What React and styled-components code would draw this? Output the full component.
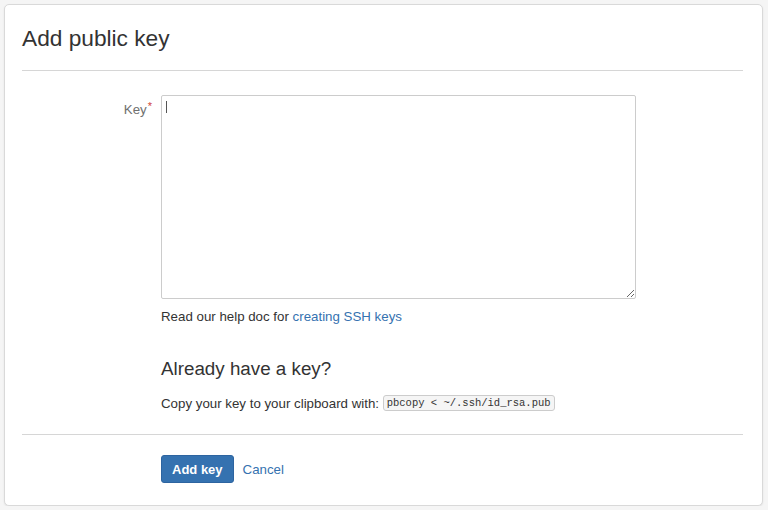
import styled, { createGlobalStyle } from "styled-components";

const colors = {
    page: "#f5f5f5",
    border: "#cccccc",
    text: "#333333",
    label: "#707070",
    link: "#3572b0",
    rule: "#d6d6d6",
    required: "#d04437",
};

const GlobalStyle = createGlobalStyle`
    html, body {
        margin: 0;
        padding: 0;
        background: ${colors.page};
        font-family: "Liberation Sans", Arial, sans-serif;
        color: ${colors.text};
    }
`;

export default function App() {
    return (
        <>
            <GlobalStyle />
            <Dialog>
                <Header>
                    <Title>Add public key</Title>
                </Header>
                <Body>
                    <FieldRow>
                        <Label>
                            Key<Required>*</Required>
                        </Label>
                        <Field>
                            <TextBox>
                                <KeyInput aria-label="Key" />
                                <Caret />
                            </TextBox>
                            <Help>
                                Read our help doc for <Link href="#">creating SSH keys</Link>
                            </Help>
                            <SubTitle>Already have a key?</SubTitle>
                            <Help tight>
                                Copy your key to your clipboard with: <Code>pbcopy &lt; ~/.ssh/id_rsa.pub</Code>
                            </Help>
                        </Field>
                    </FieldRow>
                </Body>
                <Footer>
                    <Button>Add key</Button>
                    <Link href="#">Cancel</Link>
                </Footer>
            </Dialog>
        </>
    );
}

const Dialog = styled.div`
    margin: 4px 0 0 4px;
    width: 759px;
    height: 502px;
    box-sizing: border-box;
    background: #fff;
    border: 1px solid #d9d9d9;
    border-radius: 5px;
    box-shadow: 0 1px 2px rgba(0, 0, 0, 0.08);
    padding: 0 19px 0 17px;
`;

const Header = styled.div`
    padding: 21px 0 19px;
    border-bottom: 1px solid ${colors.rule};
`;

const Title = styled.h1`
    margin: 0;
    font-size: 22.7px;
    line-height: 25px;
    font-weight: normal;
    color: ${colors.text};
`;

const Body = styled.div`
    padding: 24px 0 21px;
    border-bottom: 1px solid ${colors.rule};
`;

const FieldRow = styled.div`
    display: flex;
    gap: 9px;
`;

const Label = styled.label`
    width: 130px;
    text-align: right;
    font-size: 13.3px;
    line-height: 18px;
    padding-top: 6px;
    color: ${colors.label};
`;

const Required = styled.span`
    color: ${colors.required};
    font-size: 11px;
    vertical-align: top;
    position: relative;
    top: -4px;
    margin-left: 1px;
`;

const Field = styled.div`
    display: flex;
    flex-direction: column;
`;

const TextBox = styled.div`
    position: relative;
    width: 475px;
    height: 204px;
`;

const KeyInput = styled.textarea`
    display: block;
    width: 100%;
    height: 100%;
    box-sizing: border-box;
    border: 1px solid ${colors.border};
    border-radius: 2px;
    margin: 0;
    padding: 5px;
    font-family: "Liberation Sans", Arial, sans-serif;
    font-size: 13px;
    outline: none;
    resize: both;
`;

const Caret = styled.span`
    position: absolute;
    left: 5px;
    top: 6px;
    width: 1px;
    height: 12px;
    background: #555;
`;

const Help = styled.p`
    margin: ${(p) => (p.tight ? "14px 0 0" : "9px 0 0")};
    font-size: 13.3px;
    line-height: 18px;
    color: ${colors.text};
    white-space: nowrap;
`;

const Link = styled.a`
    color: ${colors.link};
    text-decoration: none;
    font-size: 13.3px;
`;

const SubTitle = styled.h2`
    margin: 31px 0 0;
    font-size: 18.8px;
    line-height: 24px;
    font-weight: normal;
    color: ${colors.text};
`;

const Code = styled.code`
    display: inline-block;
    vertical-align: middle;
    font-family: "Liberation Mono", "Courier New", monospace;
    font-size: 10.5px;
    line-height: 14px;
    padding: 0 3px;
    margin-top: -2px;
    background: #f5f5f5;
    border: 1px solid ${colors.border};
    border-radius: 3px;
    color: ${colors.text};
`;

const Footer = styled.div`
    display: flex;
    align-items: center;
    gap: 9px;
    padding: 20px 0 0 139px;
`;

const Button = styled.button`
    height: 28px;
    padding: 0 10px;
    background: ${colors.link};
    color: #fff;
    border: 1px solid #2d64a0;
    border-radius: 3px;
    font-family: "Liberation Sans", Arial, sans-serif;
    font-weight: bold;
    font-size: 13px;
    cursor: pointer;
`;
